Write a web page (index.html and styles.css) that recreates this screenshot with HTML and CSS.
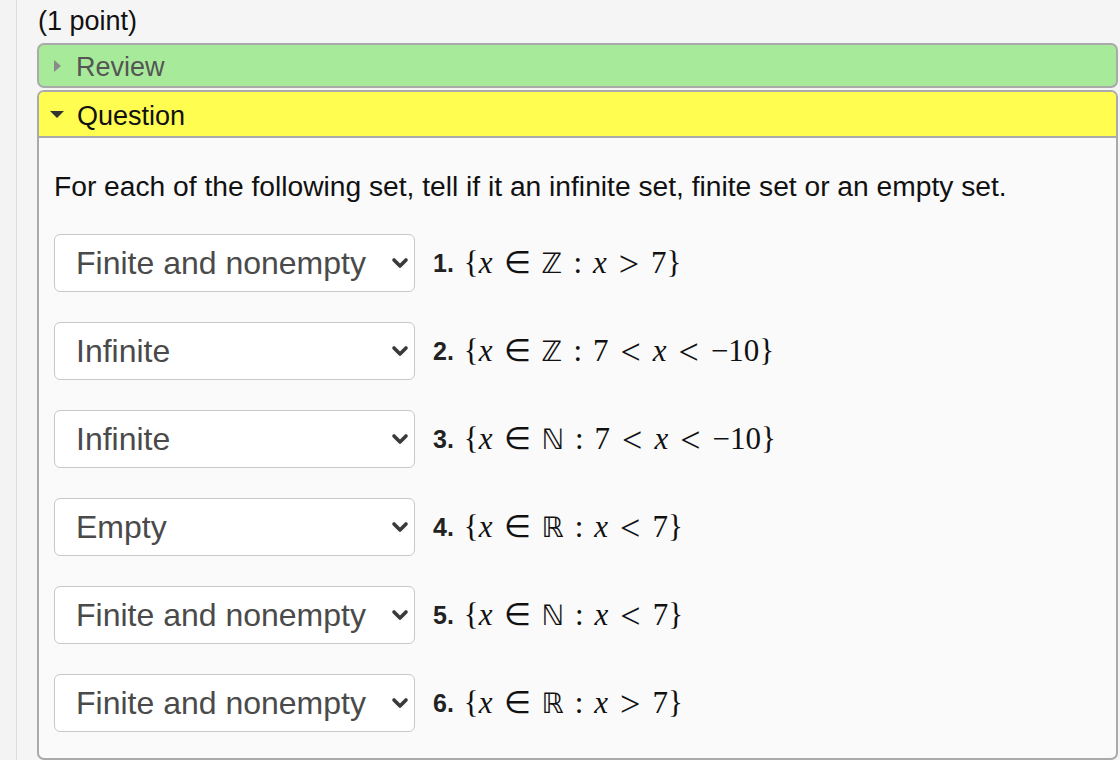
FILE: index.html
```html
<!DOCTYPE html>
<html>
    <head>
        <title>Problem</title>
        <meta charset="UTF-8">
        <meta name="viewport" content="width=device-width, initial-scale=1.0">
        <link rel="stylesheet" href="styles.css">
    </head>
    <body>
        <div class="page">
            <div class="points">(1 point)</div>

            <div class="review">
                <span class="arrow-right"></span>Review
            </div>

            <div class="question">
                <div class="question-head">
                    <span class="arrow-down"></span>Question
                </div>
                <div class="question-body">
                    <p class="prompt">For each of the following set, tell if it an infinite set, finite set or an empty set.</p>

                    <div class="row">
                        <div class="pick">
                            <select>
                                <option>Finite and nonempty</option>
                                <option>Infinite</option>
                                <option>Empty</option>
                            </select>
                            <svg class="chev" width="18" height="12" viewBox="0 0 18 12"><polyline points="3,3 9,9 15,3" fill="none" stroke="#3a3a3a" stroke-width="3.6" stroke-linecap="round" stroke-linejoin="round"/></svg>
                        </div>
                        <span class="num">1.</span>
                        <span class="math">{<i>x</i><span class="rel">∈</span><span class="bb">ℤ</span><span class="rel">:</span><i>x</i><span class="rel cmp">&gt;</span>7}</span>
                    </div>

                    <div class="row">
                        <div class="pick">
                            <select>
                                <option>Infinite</option>
                                <option>Finite and nonempty</option>
                                <option>Empty</option>
                            </select>
                            <svg class="chev" width="18" height="12" viewBox="0 0 18 12"><polyline points="3,3 9,9 15,3" fill="none" stroke="#3a3a3a" stroke-width="3.6" stroke-linecap="round" stroke-linejoin="round"/></svg>
                        </div>
                        <span class="num">2.</span>
                        <span class="math">{<i>x</i><span class="rel">∈</span><span class="bb">ℤ</span><span class="rel">:</span>7<span class="rel cmp">&lt;</span><i>x</i><span class="rel cmp">&lt;</span>−10}</span>
                    </div>

                    <div class="row">
                        <div class="pick">
                            <select>
                                <option>Infinite</option>
                                <option>Finite and nonempty</option>
                                <option>Empty</option>
                            </select>
                            <svg class="chev" width="18" height="12" viewBox="0 0 18 12"><polyline points="3,3 9,9 15,3" fill="none" stroke="#3a3a3a" stroke-width="3.6" stroke-linecap="round" stroke-linejoin="round"/></svg>
                        </div>
                        <span class="num">3.</span>
                        <span class="math">{<i>x</i><span class="rel">∈</span><span class="bb">ℕ</span><span class="rel">:</span>7<span class="rel cmp">&lt;</span><i>x</i><span class="rel cmp">&lt;</span>−10}</span>
                    </div>

                    <div class="row">
                        <div class="pick">
                            <select>
                                <option>Empty</option>
                                <option>Infinite</option>
                                <option>Finite and nonempty</option>
                            </select>
                            <svg class="chev" width="18" height="12" viewBox="0 0 18 12"><polyline points="3,3 9,9 15,3" fill="none" stroke="#3a3a3a" stroke-width="3.6" stroke-linecap="round" stroke-linejoin="round"/></svg>
                        </div>
                        <span class="num">4.</span>
                        <span class="math">{<i>x</i><span class="rel">∈</span><span class="bb">ℝ</span><span class="rel">:</span><i>x</i><span class="rel cmp">&lt;</span>7}</span>
                    </div>

                    <div class="row">
                        <div class="pick">
                            <select>
                                <option>Finite and nonempty</option>
                                <option>Infinite</option>
                                <option>Empty</option>
                            </select>
                            <svg class="chev" width="18" height="12" viewBox="0 0 18 12"><polyline points="3,3 9,9 15,3" fill="none" stroke="#3a3a3a" stroke-width="3.6" stroke-linecap="round" stroke-linejoin="round"/></svg>
                        </div>
                        <span class="num">5.</span>
                        <span class="math">{<i>x</i><span class="rel">∈</span><span class="bb">ℕ</span><span class="rel">:</span><i>x</i><span class="rel cmp">&lt;</span>7}</span>
                    </div>

                    <div class="row">
                        <div class="pick">
                            <select>
                                <option>Finite and nonempty</option>
                                <option>Infinite</option>
                                <option>Empty</option>
                            </select>
                            <svg class="chev" width="18" height="12" viewBox="0 0 18 12"><polyline points="3,3 9,9 15,3" fill="none" stroke="#3a3a3a" stroke-width="3.6" stroke-linecap="round" stroke-linejoin="round"/></svg>
                        </div>
                        <span class="num">6.</span>
                        <span class="math">{<i>x</i><span class="rel">∈</span><span class="bb">ℝ</span><span class="rel">:</span><i>x</i><span class="rel cmp">&gt;</span>7}</span>
                    </div>
                </div>
            </div>
        </div>
    </body>
</html>
```

FILE: styles.css
```css
body{
    margin: 0;
    background: #f3f3f3;
    font-family: "Liberation Sans", Arial, sans-serif;
    color: #111;
}
.page{
    margin-left: 16px;
    border-left: 1px solid #dcdcdc;
    background: #f5f5f5;
    padding: 6px 2px 0 20px;
    height: 760px;
    box-sizing: border-box;
    overflow: hidden;
}
.points{
    font-size: 27px;
    line-height: 31px;
    margin-left: 1px;
    margin-bottom: 6px;
}
.review{
    background: #a7eb9a;
    border: 2px solid #aaa;
    border-radius: 7px;
    font-size: 27px;
    color: #555;
    display: flex;
    align-items: center;
    padding-top: 4px;
    height: 37px;
}
.arrow-right{
    width: 0;
    height: 0;
    border-top: 6.5px solid transparent;
    border-bottom: 6.5px solid transparent;
    border-left: 7px solid #8a8a8a;
    margin: -3px 15px 0 15px;
}
.question{
    margin-top: 2px;
    border: 2px solid #aaa;
    border-radius: 7px;
    background: #fafafa;
    height: 670px;
    box-sizing: border-box;
}
.question-head{
    height: 40px;
    padding-top: 4px;
    background: #fffd50;
    border-bottom: 2px solid #aaa;
    border-top-left-radius: 5px;
    border-top-right-radius: 5px;
    font-size: 27px;
    color: #111;
    display: flex;
    align-items: center;
}
.arrow-down{
    width: 0;
    height: 0;
    border-left: 7px solid transparent;
    border-right: 7px solid transparent;
    border-top: 7px solid #333;
    margin: -4px 13px 0 11px;
}
.question-body{
    padding: 0 0 0 15px;
}
.prompt{
    font-size: 28.2px;
    margin: 33px 0 33px 0;
    line-height: 30px;
}
.row{
    display: flex;
    align-items: center;
    margin-bottom: 30px;
}
.pick{
    position: relative;
    width: 361px;
    height: 58px;
}
.pick select{
    appearance: none;
    -webkit-appearance: none;
    width: 100%;
    height: 100%;
    border: 1.5px solid #c8c8c8;
    border-radius: 6px;
    background: #fff;
    font-family: "Liberation Sans", Arial, sans-serif;
    font-size: 32px;
    color: #4a4a4a;
    padding: 0 0 0 21px;
}
.chev{
    position: absolute;
    right: 6px;
    top: 23px;
}
.num{
    font-weight: bold;
    font-size: 25px;
    margin-left: 18px;
    margin-right: 10px;
    color: #222;
}
.math{
    font-family: "Liberation Serif", "Times New Roman", serif;
    font-size: 31px;
    color: #111;
}
.math i{
    font-style: italic;
}
.rel{
    margin: 0 11px;
}
.cmp{
    font-size: 36px;
    line-height: 1;
    vertical-align: -3px;
    margin: 0 12px;
}
.bb{
    font-family: "DejaVu Sans", sans-serif;
    font-size: 28px;
    font-weight: normal;
}
```
